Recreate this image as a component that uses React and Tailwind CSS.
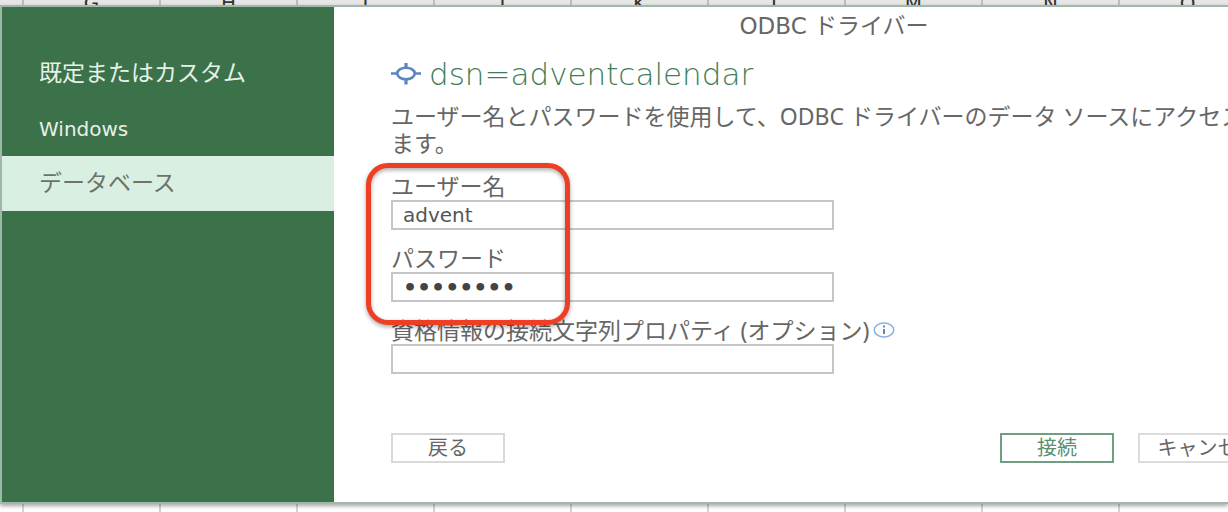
import { useState } from 'react'

const COLUMNS = ['G', 'H', 'I', 'J', 'K', 'L', 'M', 'N', 'O']

const TABS = [
  { id: 'default', label: '既定またはカスタム' },
  { id: 'windows', label: 'Windows' },
  { id: 'database', label: 'データベース' },
]

function TargetIcon() {
  return (
    <svg viewBox="0 0 30 22" fill="none" stroke="#5b86bf" strokeWidth={2.6} className="w-[30px] h-[22px] shrink-0">
      <ellipse cx="15" cy="10.5" rx="8.8" ry="5.8" />
      <path d="M0 10.5h6.4M23.6 10.5H30" />
      <path d="M15 0v5M15 16v5.5" strokeWidth={3.2} />
    </svg>
  )
}

function InfoIcon() {
  return (
    <svg viewBox="0 0 22 16" fill="none" stroke="#8fb0e0" className="w-[22px] h-4 shrink-0">
      <ellipse cx="11" cy="8" rx="9.8" ry="7" strokeWidth={1.6} />
      <path d="M11 7v5" stroke="#5b86bf" strokeWidth={2} />
      <path d="M11 3.6v1.8" stroke="#5b86bf" strokeWidth={2} />
    </svg>
  )
}

function Field({ id, label, type = 'text', info, value, onChange }) {
  return (
    <div>
      <div className="h-7 flex items-center gap-1 font-['Noto_Sans','Noto_Sans_CJK_JP',sans-serif]">
        <label htmlFor={id} className="whitespace-nowrap">{label}</label>
        {info && <InfoIcon />}
      </div>
      <input
        id={id}
        type={type}
        value={value}
        autoComplete="off"
        onChange={e => onChange(e.target.value)}
        className={`block w-[443px] h-[30px] px-2.5 bg-white border-2 border-[#c6c6c6] leading-6 outline-none ${
          type === 'password' ? 'text-[22px] font-bold text-[#444]' : 'text-xl text-[#555]'
        }`}
      />
    </div>
  )
}

export default function App() {
  const [tab, setTab] = useState('database')
  const [user, setUser] = useState('advent')
  const [password, setPassword] = useState('calendar')
  const [props, setProps] = useState('')

  return (
    <div className="w-full overflow-hidden bg-white font-['DejaVu_Sans','Noto_Sans_CJK_JP',sans-serif] text-[23px] leading-[27px] text-[#666]">
      {/* sheet header behind the dialog */}
      <div className="flex h-[5px] overflow-hidden bg-[#e6e6e6] pl-[22px] text-xl leading-5 text-[#333]">
        {COLUMNS.map(c => (
          <div key={c} className="w-[137px] shrink-0 flex items-center justify-center border-l-2 border-[#bdbdbd]">{c}</div>
        ))}
      </div>

      <div className="relative flex border-y-2 border-l-2 border-[#9db9a8] shadow-[0_2px_4px_rgba(0,0,0,0.35)]">
        <nav className="w-[332px] shrink-0 bg-[#3b724a] pt-[39px] flex flex-col">
          {TABS.map(t => (
            <button
              key={t.id}
              onClick={() => setTab(t.id)}
              className={`h-[55px] pl-[37px] text-left whitespace-nowrap ${
                tab === t.id ? 'bg-[#d9efe1] text-[#6b736e]' : 'text-[#e6f0e9]'
              } ${t.id === 'windows' ? 'text-xl' : ''}`}>
              {t.label}
            </button>
          ))}
        </nav>

        <main className="flex-1 min-w-[1000px] bg-white px-[57px] pb-[39px]">
          <h1 className="h-[38px] flex items-center justify-center">ODBC ドライバー</h1>
          <div className="h-[58px] flex items-center gap-2">
            <TargetIcon />
            <h2 className="text-[31px] font-extralight text-[#3f7d59]">dsn=adventcalendar</h2>
          </div>
          <p className="font-['Noto_Sans','Noto_Sans_CJK_JP',sans-serif]">
            ユーザー名とパスワードを使用して、ODBC ドライバーのデータ ソースにアクセスします。
          </p>

          <div className="relative mt-[15px] flex flex-col gap-3.5">
            <Field id="user" label="ユーザー名" value={user} onChange={setUser} />
            <Field id="password" label="パスワード" type="password" value={password} onChange={setPassword} />
            <Field id="props" label="資格情報の接続文字列プロパティ (オプション)" info value={props} onChange={setProps} />
            <div className="absolute -top-[9px] -left-[25px] w-[204px] h-[162px] border-[5px] border-[#ee3f24] rounded-[22px] pointer-events-none drop-shadow-[0_2px_2px_rgba(0,0,0,0.35)]" />
          </div>

          <div className="mt-[59px] flex gap-6 text-xl leading-6">
            <button className="w-[114px] h-[30px] flex items-center justify-center border-2 border-[#d9d9d9]">戻る</button>
            <button className="ml-auto w-[114px] h-[30px] flex items-center justify-center border-2 border-[#6f9f80] text-[#5c8f70]">接続</button>
            <button className="w-[139px] h-[30px] flex items-center justify-center border-2 border-[#dcdcdc]">キャンセル</button>
          </div>
        </main>
      </div>

      <div className="flex h-2 pl-[22px]">
        {COLUMNS.map(c => (
          <div key={c} className="w-[137px] shrink-0 border-l-2 border-[#d4d4d4]" />
        ))}
      </div>
    </div>
  )
}
